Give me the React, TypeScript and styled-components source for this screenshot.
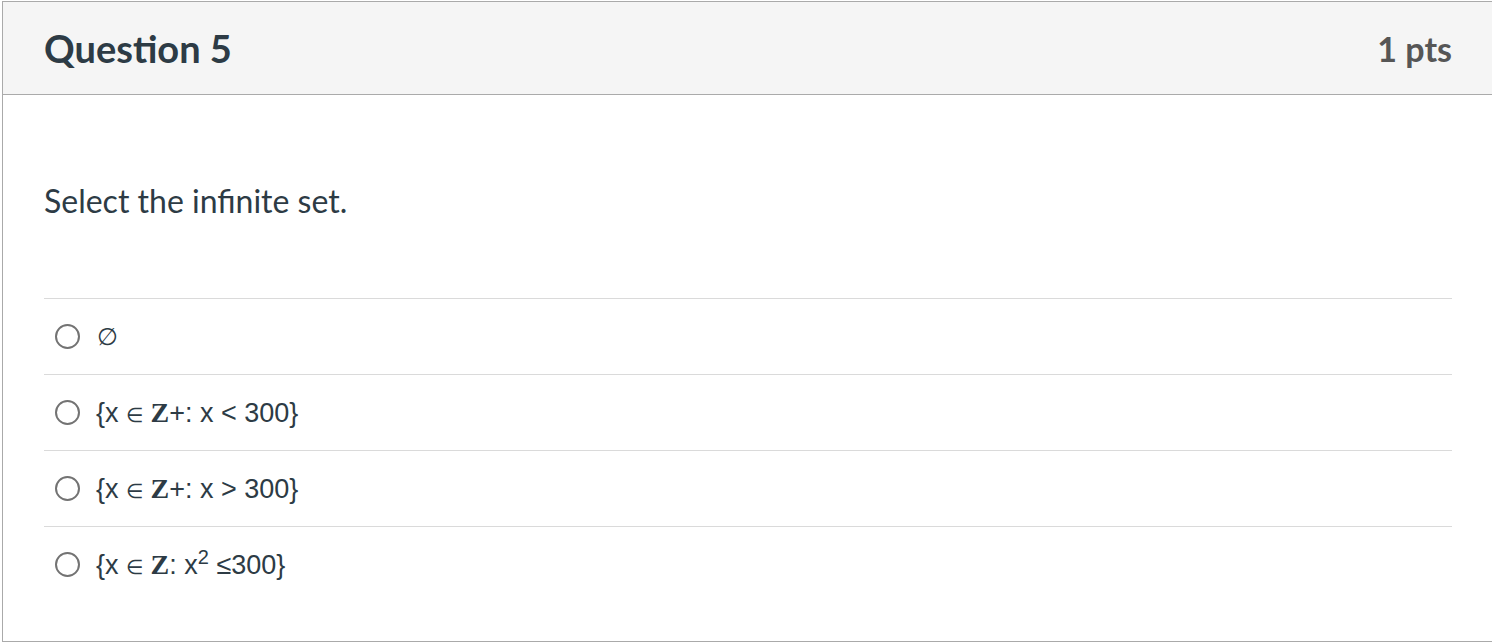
import styled, { createGlobalStyle } from "styled-components"

const GlobalStyle = createGlobalStyle`
    html, body {
        margin: 0;
        padding: 0;
        background: #ffffff;
        overflow: hidden;
    }
    body {
        font-family: Lato, "Liberation Sans", sans-serif;
        color: #2d3b45;
    }
`

const Panel = styled.div`
    box-sizing: border-box;
    width: 1491px;
    height: 641px;
    margin: 1px 0 0 2px;
    border: 1px solid #aaaaaa;
    display: flex;
    flex-direction: column;
`

const Header = styled.div`
    box-sizing: border-box;
    height: 93px;
    flex-shrink: 0;
    padding: 0 40px 0 41px;
    background: #f5f5f5;
    border-bottom: 1px solid #aaaaaa;
    display: flex;
    align-items: center;
    justify-content: space-between;
`

const Title = styled.h2`
    margin: 0;
    font-size: 38px;
    font-weight: 700;
    color: #2d3b45;
`

const Points = styled.div`
    font-size: 34px;
    font-weight: 700;
    color: #565656;
`

const Body = styled.div`
    flex: 1;
    padding: 85px 40px 0 41px;
`

const Prompt = styled.p`
    margin: 0 0 76px;
    font-size: 32px;
    line-height: 42px;
    color: #2d3b45;
`

const AnswerRow = styled.label`
    display: flex;
    align-items: center;
    height: 75px;
    border-top: 1px solid #dadada;
    padding-left: 11px;
    gap: 16px;
    font-family: "Liberation Sans", Arial, sans-serif;
    font-size: 27px;
    color: #2d3b45;
`

const Radio = styled.span`
    box-sizing: border-box;
    width: 25px;
    height: 25px;
    border-radius: 50%;
    border: 2px solid #737373;
    background: #ffffff;
    flex-shrink: 0;
`

const EmptySet = styled.span`
    font-size: 24px;
    margin-left: 1px;
`

const ElementOf = styled.span`
    font-size: 20px;
`

const Integers = styled.b`
    font-family: "Liberation Serif", "Times New Roman", serif;
    font-weight: 700;
    font-size: 28px;
`

const Sup = styled.sup`
    font-size: 20px;
    line-height: 0;
    vertical-align: 10px;
`

const answers = [
    <EmptySet>∅</EmptySet>,
    <span>{"{x "}<ElementOf>∈</ElementOf>{" "}<Integers>Z</Integers>{"+: x < 300}"}</span>,
    <span>{"{x "}<ElementOf>∈</ElementOf>{" "}<Integers>Z</Integers>{"+: x > 300}"}</span>,
    <span>{"{x "}<ElementOf>∈</ElementOf>{" "}<Integers>Z</Integers>{": x"}<Sup>2</Sup>{" ≤300}"}</span>,
]

const App = () => {
    return (
        <>
            <GlobalStyle />
            <Panel>
                <Header>
                    <Title>Question 5</Title>
                    <Points>1 pts</Points>
                </Header>
                <Body>
                    <Prompt>Select the infinite set.</Prompt>
                    {answers.map((answer, i) => (
                        <AnswerRow key={i}>
                            <Radio />
                            {answer}
                        </AnswerRow>
                    ))}
                </Body>
            </Panel>
        </>
    )
}

export default App
